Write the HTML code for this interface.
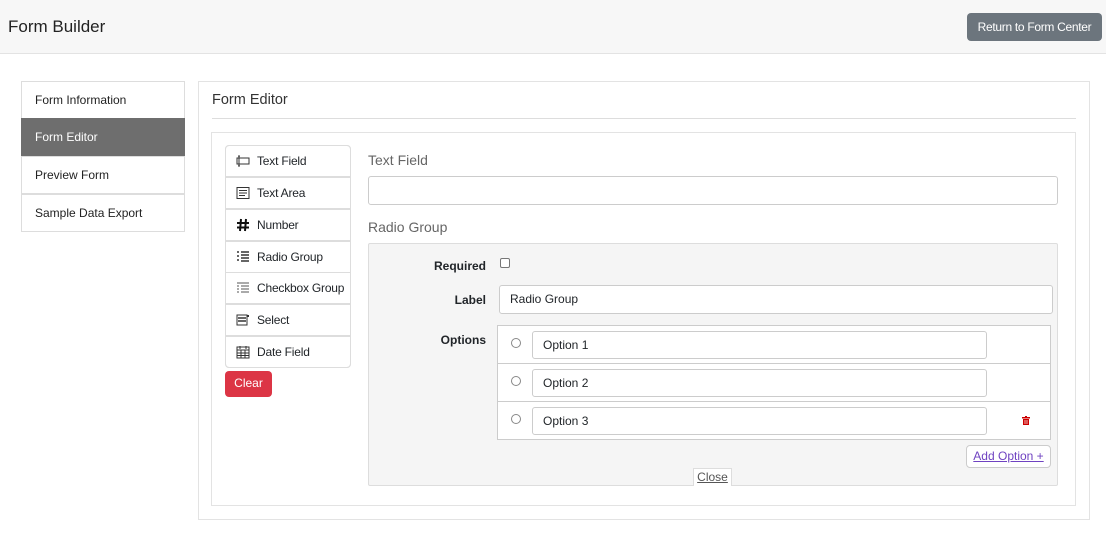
<!DOCTYPE html><html><head><style>
*{box-sizing:border-box}body{margin:0;width:1106px;height:553px;background:#fff;font-family:"Liberation Sans",sans-serif;position:relative;overflow:hidden;color:#212529}
.a{position:absolute}
.hdr{left:0;top:0;width:1106px;height:54px;background:#f7f7f7;border-bottom:1px solid #e3e3e3}
.nav{left:21px;width:164px;height:38px;border:1px solid #ddd;font-size:12px;padding-left:13px;line-height:37px;color:#222}
.fl{left:225px;width:126px;height:32px;border:1px solid #ddd;font-size:12px;line-height:31px;padding-left:31px;letter-spacing:-0.2px}
.ic{position:absolute;left:10px;top:8px;width:14px;height:14px}
.inp{background:#fff;border:1px solid #ccc;border-radius:3px;font-size:12px;padding-left:10px}
.lbl{font-size:12px;font-weight:bold;text-align:right;width:100px}
.rad{width:10px;height:10px;border:1px solid #888;border-radius:50%;background:#fff}
</style></head><body>
<div class="a hdr"></div>
<div class="a" style="left:8px;top:17px;font-size:17px;color:#222">Form Builder</div>
<div class="a" style="left:967px;top:13px;width:135px;height:28px;background:#6c757d;border-radius:4px;color:#fff;font-size:12px;letter-spacing:-0.3px;text-align:center;line-height:28px">Return to Form Center</div>

<div class="a nav" style="top:81px">Form Information</div>
<div class="a nav" style="top:118px;background:#6e6e6e;color:#fff;border-color:#6e6e6e">Form Editor</div>
<div class="a nav" style="top:156px">Preview Form</div>
<div class="a nav" style="top:194px;height:38px">Sample Data Export</div>

<div class="a" style="left:198px;top:81px;width:892px;height:439px;border:1px solid #e3e3e3"></div>
<div class="a" style="left:212px;top:92px;font-size:14.5px;color:#333">Form Editor</div>
<div class="a" style="left:212px;top:118px;width:864px;border-top:1px solid #ddd"></div>
<div class="a" style="left:211px;top:132px;width:865px;height:374px;border:1px solid #e3e3e3"></div>

<div class="a" style="left:225px;top:145px;width:126px;height:223px;border:1px solid #ddd;border-radius:4px"></div>
<div class="a fl" style="top:145px;border-radius:4px 4px 0 0"><svg class="ic" viewBox="0 0 14 14"><rect x="1" y="4" width="12" height="6" fill="none" stroke="#333"/><path d="M3 2v10M2 2h2M2 12h2" stroke="#333"/></svg>Text Field</div>
<div class="a fl" style="top:177px"><svg class="ic" viewBox="0 0 14 14"><rect x="1" y="1.5" width="12" height="11" fill="none" stroke="#333"/><path d="M3 4.5h8M3 7h8M3 9.5h6" stroke="#333"/></svg>Text Area</div>
<div class="a fl" style="top:209px"><svg class="ic" viewBox="0 0 14 14"><path d="M5 1L4 13M10 1L9 13M1 5h12M1 9.5h12" stroke="#111" stroke-width="2"/></svg>Number</div>
<div class="a fl" style="top:241px"><svg class="ic" viewBox="0 0 14 14"><path d="M1 2h2M1 6h2M1 10h2M5 2h8M5 5h8M5 8h8M5 11h8" stroke="#333" stroke-width="1.4"/></svg>Radio Group</div>
<div class="a fl" style="top:272px"><svg class="ic" viewBox="0 0 14 14"><path d="M1 2h12M1 5h2M1 8h2M1 11h2M5 5h8M5 8h8M5 11h8" stroke="#555" stroke-width="1"/></svg>Checkbox Group</div>
<div class="a fl" style="top:304px"><svg class="ic" viewBox="0 0 14 14"><rect x="1" y="2" width="10" height="10" fill="none" stroke="#333"/><path d="M2 5h8M2 8h8" stroke="#333" stroke-width="1.5"/><rect x="11" y="2" width="2" height="2" fill="#333"/></svg>Select</div>
<div class="a fl" style="top:336px;border-radius:0 0 4px 4px"><svg class="ic" viewBox="0 0 14 14"><rect x="1" y="2" width="12" height="11" fill="none" stroke="#333"/><path d="M1 5h12M4 1v3M10 1v3M5 5v8M9 5v8M1 8h12M1 10.5h12" stroke="#333"/></svg>Date Field</div>
<div class="a" style="left:225px;top:371px;width:47px;height:26px;background:#dc3545;border-radius:4px;color:#fff;font-size:12px;text-align:center;line-height:25px">Clear</div>

<div class="a" style="left:368px;top:152px;font-size:14px;color:#666">Text Field</div>
<div class="a inp" style="left:368px;top:176px;width:690px;height:29px"></div>
<div class="a" style="left:368px;top:219px;font-size:14px;color:#666">Radio Group</div>
<div class="a" style="left:368px;top:243px;width:690px;height:243px;background:#f5f5f5;border:1px solid #ddd;border-radius:2px"></div>
<div class="a lbl" style="left:386px;top:259px">Required</div>
<div class="a" style="left:500px;top:258px;width:10px;height:10px;border:1px solid #777;border-radius:2px;background:#fff"></div>
<div class="a lbl" style="left:386px;top:293px">Label</div>
<div class="a inp" style="left:499px;top:285px;width:554px;height:29px;line-height:27px">Radio Group</div>
<div class="a lbl" style="left:386px;top:333px">Options</div>
<div class="a" style="left:497px;top:325px;width:554px;height:115px;background:#fff;border:1px solid #ccc"></div>
<div class="a" style="left:497px;top:363px;width:554px;border-top:1px solid #ccc"></div>
<div class="a" style="left:497px;top:401px;width:554px;border-top:1px solid #ccc"></div>
<div class="a rad" style="left:511px;top:338px"></div>
<div class="a rad" style="left:511px;top:376px"></div>
<div class="a rad" style="left:511px;top:414px"></div>
<div class="a inp" style="left:532px;top:331px;width:455px;height:28px;line-height:26px">Option 1</div>
<div class="a inp" style="left:532px;top:369px;width:455px;height:28px;line-height:26px">Option 2</div>
<div class="a inp" style="left:532px;top:407px;width:455px;height:28px;line-height:26px">Option 3</div>
<svg class="a" style="left:1022px;top:416px" width="8" height="9" viewBox="0 0 8 9"><rect x="0" y="1" width="8" height="1.5" fill="#c00"/><rect x="3" y="0" width="2" height="1" fill="#c00"/><path d="M1 3h6v6H1z" fill="#c00"/><path d="M3 4v4M5 4v4" stroke="#fff" stroke-width=".7"/></svg>
<div class="a" style="left:966px;top:445px;width:85px;height:23px;background:#fff;border:1px solid #ccc;border-radius:4px;font-size:12px;color:#6f42c1;text-decoration:underline;text-align:center;line-height:21px">Add Option +</div>
<div class="a" style="left:693px;top:468px;width:39px;height:18px;background:#fff;border:1px solid #ddd;border-bottom:none;font-size:12px;color:#555;text-decoration:underline;text-align:center;line-height:17px">Close</div>
</body></html>
